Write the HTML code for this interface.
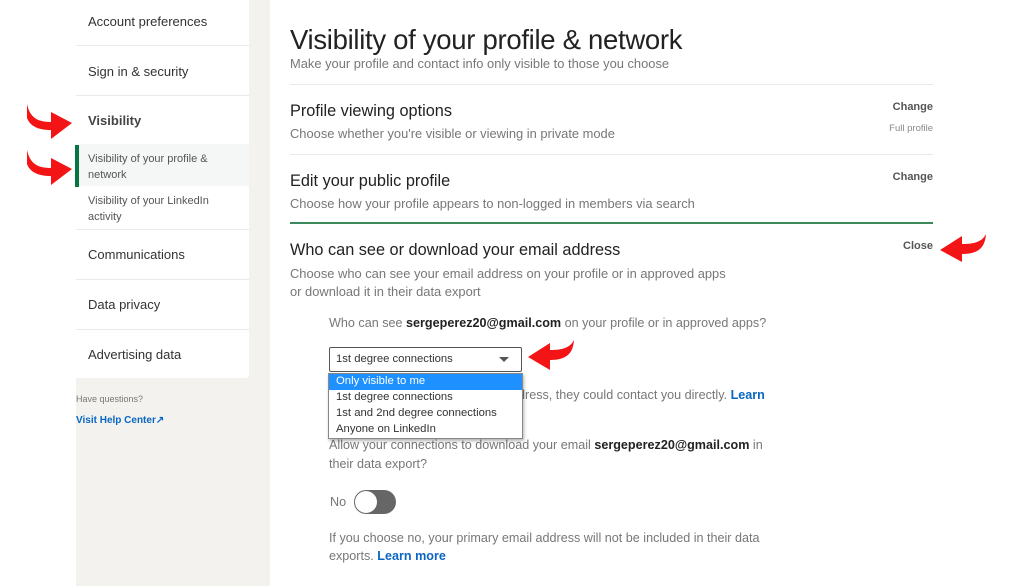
<!DOCTYPE html>
<html><head><meta charset="utf-8"><style>
*{margin:0;padding:0;box-sizing:border-box}
body{width:1024px;height:586px;position:relative;overflow:hidden;background:#fff;font-family:"Liberation Sans",Arial,sans-serif;color:#333}
.a{position:absolute;white-space:nowrap}
.gray{position:absolute;background:#f3f2ef}
.nav{font-size:13px;color:#333}
.sub{font-size:11px;color:#555;line-height:16px}
.hr{position:absolute;height:1px;background:#e9e9e9}
.h{font-size:16.3px;color:#222}
.d{font-size:12.9px;color:#777}
.ch{font-size:11px;font-weight:bold;color:#555}
.t{font-size:12.6px;color:#777}
b{color:#222}
.lk{color:#0a66c2;font-weight:bold}
</style></head><body>
<div class="gray" style="left:76px;top:0;width:194px;height:586px"></div>
<div style="position:absolute;left:76px;top:0;width:173px;height:378px;background:#fff;border-radius:0 0 3px 0"></div>
<div class="a nav" style="left:88px;top:14px">Account preferences</div>
<div class="hr" style="left:76px;top:45px;width:173px"></div>
<div class="a nav" style="left:88px;top:64px">Sign in &amp; security</div>
<div class="hr" style="left:76px;top:95px;width:173px"></div>
<div class="a nav" style="left:88px;top:113px;font-weight:bold;color:#444">Visibility</div>
<div style="position:absolute;left:76px;top:144px;width:173px;height:42px;background:#f5f7f7"></div>
<div style="position:absolute;left:75px;top:145px;width:4px;height:42px;background:#057642"></div>
<div class="a sub" style="left:88px;top:151px">Visibility of your profile &amp;<br>network</div>
<div class="a sub" style="left:88px;top:193px">Visibility of your LinkedIn<br>activity</div>
<div class="hr" style="left:76px;top:229px;width:173px"></div>
<div class="a nav" style="left:88px;top:247px">Communications</div>
<div class="hr" style="left:76px;top:279px;width:173px"></div>
<div class="a nav" style="left:88px;top:297px">Data privacy</div>
<div class="hr" style="left:76px;top:329px;width:173px"></div>
<div class="a nav" style="left:88px;top:347px">Advertising data</div>
<div class="a" style="left:76px;top:394px;font-size:9px;color:#777">Have questions?</div>
<div class="a" style="left:76px;top:415px;font-size:10px;color:#0a66c2;font-weight:bold">Visit Help Center<span style="font-size:10px">&#x2197;</span></div>

<svg style="position:absolute;left:24px;top:100px" width="52" height="90" viewBox="0 0 52 90">
<path d="M3 4 C6 18 14 22 27 22 L27 12 L48 23 L27 39 L27 30 C14 30 6 26 3 18 Z" fill="#f31515"/>
<path d="M3 50 C6 64 14 68 27 68 L27 58 L48 69 L27 85 L27 76 C14 76 6 72 3 64 Z" fill="#f31515"/>
</svg>

<div class="a" style="left:290px;top:24px;font-size:27.5px;color:#222;letter-spacing:-0.3px">Visibility of your profile &amp; network</div>
<div class="a d" style="left:290px;top:56px">Make your profile and contact info only visible to those you choose</div>
<div class="hr" style="left:290px;top:84px;width:643px"></div>
<div class="a h" style="left:290px;top:102px">Profile viewing options</div>
<div class="a d" style="left:290px;top:126px">Choose whether you're visible or viewing in private mode</div>
<div class="a ch" style="right:91px;top:101px">Change</div>
<div class="a" style="right:91px;top:123px;font-size:9.5px;color:#888">Full profile</div>
<div class="hr" style="left:290px;top:154px;width:643px"></div>
<div class="a h" style="left:290px;top:172px">Edit your public profile</div>
<div class="a d" style="left:290px;top:196px">Choose how your profile appears to non-logged in members via search</div>
<div class="a ch" style="right:91px;top:171px">Change</div>
<div style="position:absolute;left:290px;top:222px;width:643px;height:2px;background:#3c8a5c"></div>
<div class="a h" style="left:290px;top:241px">Who can see or download your email address</div>
<div class="a d" style="left:290px;top:265px;line-height:18px">Choose who can see your email address on your profile or in approved apps<br>or download it in their data export</div>
<div class="a ch" style="right:91px;top:240px">Close</div>
<svg style="position:absolute;left:938px;top:228px" width="52" height="40" viewBox="0 0 52 40">
<path d="M48 2 C47 16 40 22 24 22 L24 30 L2 18 L24 4 L24 12 C36 12 44 10 48 2 Z" fill="#f31515" transform="translate(0,4)"/>
</svg>

<div class="a t" style="left:329px;top:316px">Who can see <b>sergeperez20@gmail.com</b> on your profile or in approved apps?</div>
<div style="position:absolute;left:329px;top:347px;width:193px;height:25px;border:1px solid #555;border-radius:2px;background:#fff"></div>
<div class="a" style="left:336px;top:353px;font-size:11.3px;color:#333">1st degree connections</div>
<div style="position:absolute;left:499px;top:357px;width:0;height:0;border-left:5px solid transparent;border-right:5px solid transparent;border-top:5px solid #555"></div>
<svg style="position:absolute;left:526px;top:338px" width="52" height="40" viewBox="0 0 52 40">
<path d="M48 2 C47 16 40 22 24 22 L24 32 L2 19 L24 5 L24 12 C36 12 44 10 48 2 Z" fill="#f31515"/>
</svg>
<div class="a t" style="left:329px;top:386px;line-height:18px">If someone can see your email address, they could contact you directly. <span class="lk">Learn</span></div>
<div class="a t" style="left:329px;top:436px;line-height:19px">Allow your connections to download your email <b>sergeperez20@gmail.com</b> in<br>their data export?</div>
<div style="position:absolute;left:328px;top:373px;width:195px;height:66px;background:#fff;border:1px solid #888;box-shadow:1px 2px 3px rgba(0,0,0,.3)"></div>
<div style="position:absolute;left:329px;top:374px;width:193px;height:16px;background:#1e90ff"></div>
<div class="a" style="left:336px;top:375px;font-size:11.3px;color:#fff">Only visible to me</div>
<div class="a" style="left:336px;top:391px;font-size:11.3px;color:#333">1st degree connections</div>
<div class="a" style="left:336px;top:407px;font-size:11.3px;color:#333">1st and 2nd degree connections</div>
<div class="a" style="left:336px;top:423px;font-size:11.3px;color:#333">Anyone on LinkedIn</div>
<div class="a t" style="left:330px;top:495px">No</div>
<div style="position:absolute;left:354px;top:490px;width:42px;height:24px;border-radius:12px;background:#666"></div>
<div style="position:absolute;left:355px;top:491px;width:22px;height:22px;border-radius:50%;background:#fff"></div>
<div class="a t" style="left:329px;top:529px;line-height:18px">If you choose no, your primary email address will not be included in their data<br>exports. <span class="lk">Learn more</span></div>
</body></html>
